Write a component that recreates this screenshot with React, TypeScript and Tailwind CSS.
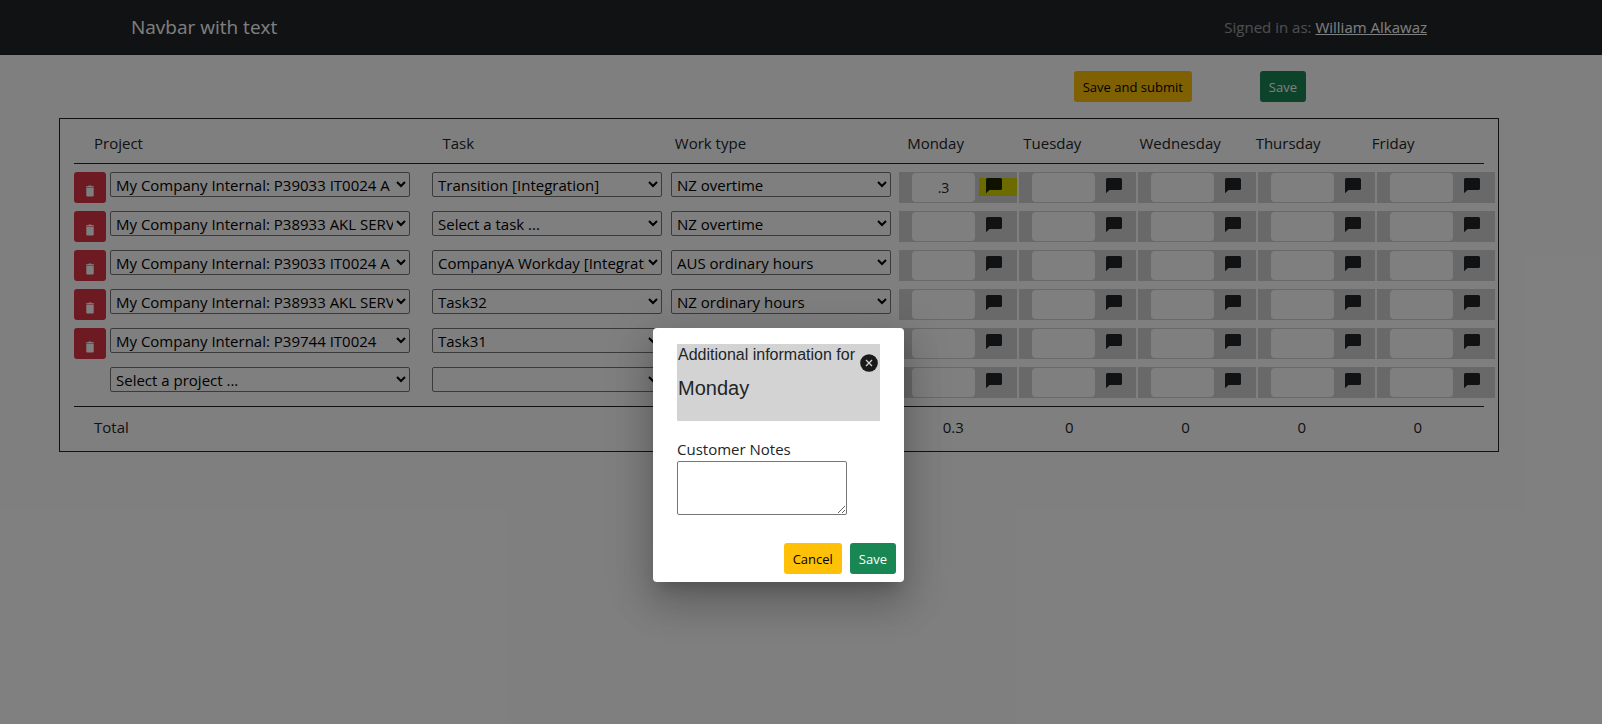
const DAYS = ["Monday", "Tuesday", "Wednesday", "Thursday", "Friday"];

type Row = { project: string; task: string; workType: string; hours?: string; removable: boolean };

const ROWS: Row[] = [
  { project: "My Company Internal: P39033 IT0024 A", task: "Transition [Integration]", workType: "NZ overtime", hours: ".3", removable: true },
  { project: "My Company Internal: P38933 AKL SERV", task: "Select a task ...", workType: "NZ overtime", removable: true },
  { project: "My Company Internal: P39033 IT0024 A", task: "CompanyA Workday [Integration]", workType: "AUS ordinary hours", removable: true },
  { project: "My Company Internal: P38933 AKL SERV", task: "Task32", workType: "NZ ordinary hours", removable: true },
  { project: "My Company Internal: P39744 IT0024", task: "Task31", workType: "NZ ordinary hours", removable: true },
  { project: "Select a project ...", task: "", workType: "", removable: false },
];

const TOTALS = ["0.3", "0", "0", "0", "0"];

function TrashIcon() {
  return (
    <svg viewBox="0 0 10 12" className="h-3 w-2.5" fill="currentColor" aria-hidden="true">
      <path d="M1 1.200h2.200l.7-.7h2.200l.7.7H9v.8H1zM1.300 2.500h7.400v8a1 1 0 0 1-1 1H2.300a1 1 0 0 1-1-1z" />
    </svg>
  );
}

function CommentIcon() {
  return (
    <svg viewBox="0 0 16 16" className="size-4" fill="currentColor" aria-hidden="true">
      <path d="M1.500 0h13A1.500 1.500 0 0 1 16 1.500v9a1.500 1.500 0 0 1-1.500 1.500H3.500L0 15.300V1.500A1.500 1.500 0 0 1 1.500 0z" />
    </svg>
  );
}

function Picker({ label, value }: { label: string; value: string }) {
  return (
    <select
      aria-label={label}
      defaultValue={value}
      className="block h-[25px] w-full min-w-0 rounded-[2px] border border-[#767676] bg-white pl-px text-[15px] text-black"
    >
      <option>{value}</option>
    </select>
  );
}

function DayCell({ day, hours, marked }: { day: string; hours?: string; marked: boolean }) {
  return (
    <div className="flex h-[31px] bg-[#d3d3d3] pl-[13px]">
      <input
        aria-label={`${day} hours`}
        defaultValue={hours}
        className="my-px h-[29px] w-[63px] rounded-sm bg-white text-center text-sm text-[#212529]"
      />
      <button
        type="button"
        aria-label={`${day} notes`}
        className={`mt-1.5 ml-1 flex h-[18px] flex-1 pl-[7px] ${marked ? "bg-[#d6d600] text-[#212500]" : "text-[#212529]"}`}
      >
        <CommentIcon />
      </button>
    </div>
  );
}

export default function App() {
  return (
    <div className="relative min-h-screen bg-white font-['Open_Sans',sans-serif] text-[15px] leading-6 text-[#212529]">
      <nav className="flex h-[55px] items-center justify-between bg-[#212529] pr-[175px] pb-0.5 pl-[131px]">
        <a href="#" className="text-[19px] text-white">Navbar with text</a>
        <p className="text-white/55">
          Signed in as: <a href="#login" className="text-white underline">William Alkawaz</a>
        </p>
      </nav>

      <div className="flex justify-end gap-[68px] pt-4 pr-[296px]">
        <button type="button" className="h-[31px] rounded-[3px] bg-[#ffc107] px-[9px] text-[13px] text-black">Save and submit</button>
        <button type="button" className="h-[31px] rounded-[3px] bg-[#198754] px-[9px] text-[13px] text-white">Save</button>
      </div>

      <main className="mt-4 mr-[103px] ml-[59px] border border-[#212529] pt-3 pb-3 pl-3.5">
        <div className="mr-3.5 border-b border-[#212529] pb-2">
          <div className="-mr-1 grid grid-cols-12 pl-5">
            <span className="col-span-3">Project</span>
            <span className="col-span-2">Task</span>
            <span className="col-span-2">Work type</span>
            {DAYS.map((d) => <span key={d}>{d}</span>)}
          </div>
        </div>

        <div className="mr-[3px] flex flex-col gap-2 py-2">
          {ROWS.map((row, i) => (
            <div key={i} className="grid grid-cols-[32px_304fr_252fr_229fr_604fr]">
              <div>
                {row.removable && (
                  <button type="button" aria-label="Delete row" className="flex h-[31px] w-8 items-center justify-center rounded-[3px] bg-[#dc3545] pt-1.5 text-white">
                    <TrashIcon />
                  </button>
                )}
              </div>
              <div className="min-w-0 pl-1"><Picker label="Project" value={row.project} /></div>
              <div className="min-w-0 pl-[22px]"><Picker label="Task" value={row.task} /></div>
              <div className="min-w-0 pl-[9px]"><Picker label="Work type" value={row.workType} /></div>
              <div className="grid min-w-0 grid-cols-5 gap-0.5 pl-2">
                {DAYS.map((d, j) => (
                  <DayCell key={d} day={d} hours={j === 0 ? row.hours : undefined} marked={i === 0 && j === 0} />
                ))}
              </div>
            </div>
          ))}
        </div>

        <div className="mr-3.5 border-t border-[#212529] pt-2">
          <div className="-mr-1 grid grid-cols-12 pl-5">
            <span className="col-span-7">Total</span>
            {TOTALS.map((t, i) => <span key={i} className="pr-6 text-center">{t}</span>)}
          </div>
        </div>
      </main>

      <div className="absolute inset-0 bg-black/50">
        <section
          role="dialog"
          aria-label="Additional information"
          className="absolute top-[328px] left-[653px] w-[251px] rounded bg-white px-6 pt-4 pb-2 shadow-[0_11px_15px_-7px_rgba(0,0,0,0.2),0_24px_38px_3px_rgba(0,0,0,0.14),0_9px_46px_8px_rgba(0,0,0,0.12)]"
        >
          <header className="flex h-[77px] items-start justify-between bg-[#d3d3d3] pr-0.5 pl-px">
            <h2 className="font-['Liberation_Sans',Arial,sans-serif] text-base leading-[21px] whitespace-nowrap">
              Additional information for
              <span className="mt-2 block text-xl leading-[30px]">Monday</span>
            </h2>
            <button type="button" aria-label="Close" className="mt-2.5 size-[18px] shrink-0">
              <svg viewBox="0 0 18 18" className="size-[18px]" aria-hidden="true">
                <circle cx="9" cy="9" r="8.800" fill="#1a1a1a" />
                <path d="M6 6l6 6M12 6l-6 6" stroke="#d3d3d3" strokeWidth="1.300" />
              </svg>
            </button>
          </header>
          <label htmlFor="customer-notes" className="mt-4 block">Customer Notes</label>
          <textarea id="customer-notes" className="block h-[54px] w-[170px] resize rounded-[2px] border border-[#767676] bg-white" />
          <div className="-mr-4 mt-7 flex justify-end gap-2">
            <button type="button" className="h-[31px] rounded-[3px] bg-[#ffc107] px-[9px] text-[13px] text-black">Cancel</button>
            <button type="button" className="h-[31px] rounded-[3px] bg-[#198754] px-[9px] text-[13px] text-white">Save</button>
          </div>
        </section>
      </div>
    </div>
  );
}
